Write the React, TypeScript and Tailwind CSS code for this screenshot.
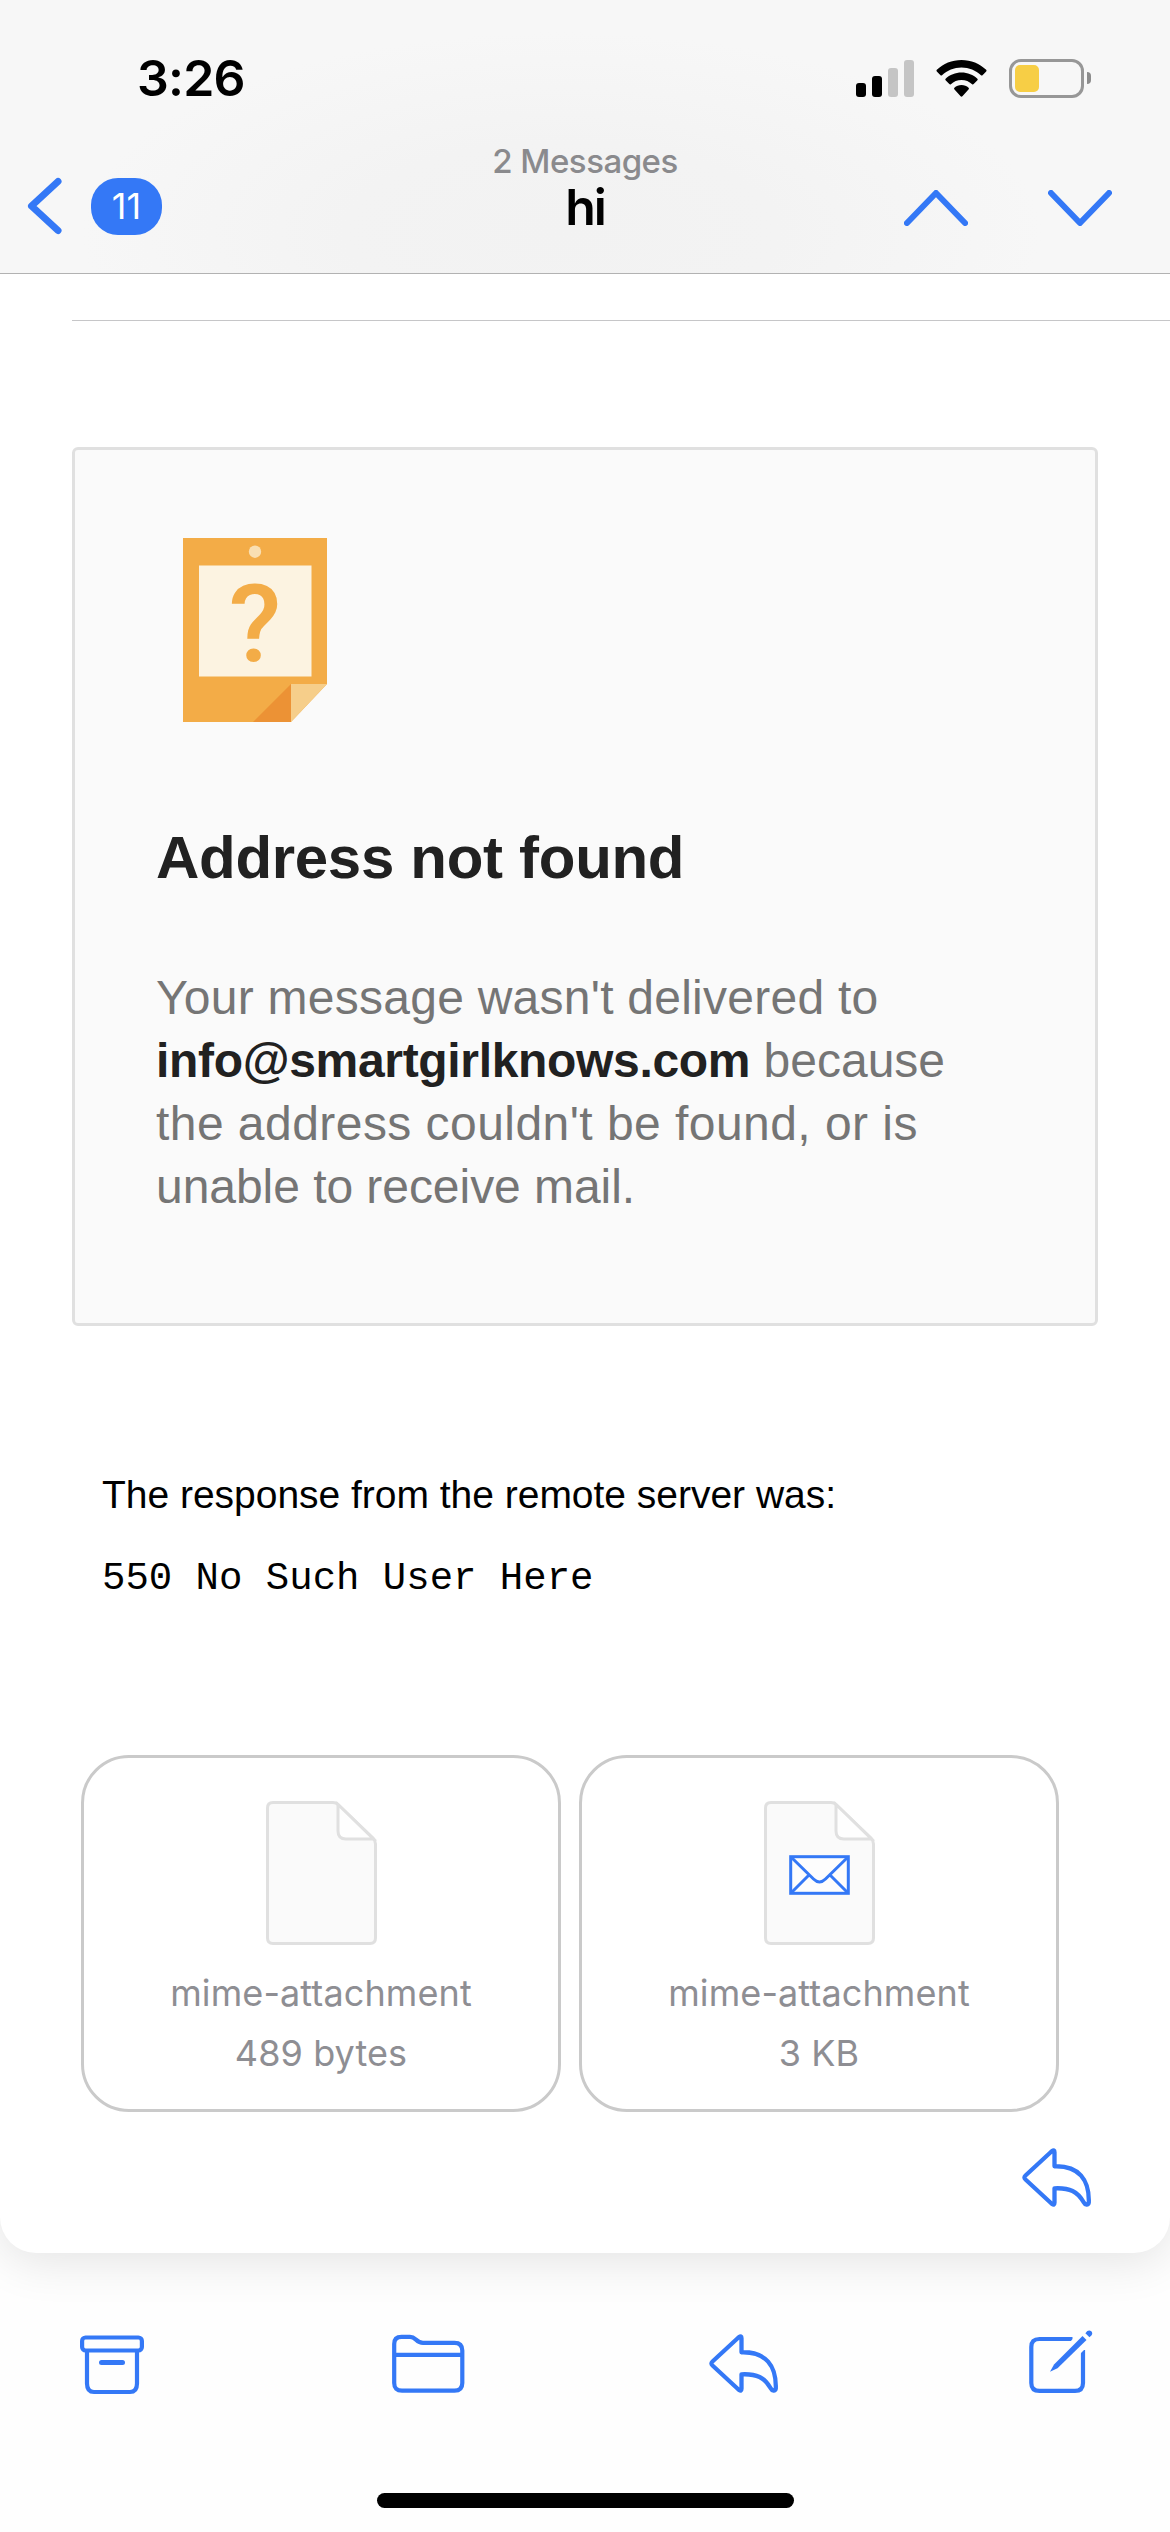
import React from "react";

const BLUE = "#3478f6";

function StatusBar() {
  return (
    <div className="flex h-[136px] items-center pt-5 pl-[137px] pr-[79px]">
      <div className="text-[50px] font-semibold leading-[60px] tracking-[-0.8px] text-black">3:26</div>
      <div className="ml-auto flex items-center">
        <div className="flex h-[37px] items-end gap-[6px]">
          <div className="h-[14px] w-[10px] rounded-[3px] bg-black" />
          <div className="h-[21px] w-[10px] rounded-[3px] bg-black" />
          <div className="h-[29px] w-[10px] rounded-[3px] bg-[#c5c5c5]" />
          <div className="h-[37px] w-[10px] rounded-[3px] bg-[#c5c5c5]" />
        </div>
        <svg className="ml-[22px]" width="51" height="37" viewBox="0 0 51 37">
          <path d="M25.5 0C35 0 43.8 3.7 50.2 9.8c.5.5.5 1.1 0 1.600L46.500 15.200c-.5.4-1 .4-1.500 0C39.800 10.300 33 7.400 25.500 7.400S11.200 10.300 6 15.200c-.5.4-1 .4-1.500 0L.8 11.400c-.5-.5-.5-1.100 0-1.600C7.200 3.700 16 0 25.500 0Z" />
          <path d="M25.500 12.500c6.100 0 11.700 2.300 15.900 6.200.5.5.5 1.100 0 1.600l-3.700 3.800c-.5.5-1.100.5-1.600.1-2.800-2.600-6.500-4.200-10.600-4.200s-7.800 1.600-10.600 4.200c-.5.4-1.100.4-1.600-.1l-3.700-3.800c-.5-.5-.5-1.100 0-1.600 4.200-3.900 9.800-6.200 15.900-6.200Z" />
          <path d="M25.500 25.100c2.700 0 5.200 1 7.100 2.700.5.5.5 1 .1 1.500l-6.300 6.900c-.5.600-1.300.600-1.800 0l-6.300-6.900c-.4-.5-.4-1 .1-1.500 1.900-1.700 4.400-2.700 7.100-2.700Z" />
        </svg>
        <div className="ml-[22px] h-[39px] w-[75px] rounded-[12px] border-[3px] border-[#979797] p-[3px]">
          <div className="h-[27px] w-6 rounded-[5px] bg-[#f7ce45]" />
        </div>
        <div className="ml-[3px] h-3 w-1 rounded-r-[4px] bg-[#8c8c8c]" />
      </div>
    </div>
  );
}

function NavBar() {
  return (
    <div className="grid h-[137px] grid-cols-3">
      <div className="flex items-center pb-px pt-1 pl-[27px]">
        <svg width="36" height="58" viewBox="0 0 36 58" fill="none" stroke={BLUE} strokeWidth="7" strokeLinecap="round" strokeLinejoin="round">
          <path d="M31 4.500 4.500 29 31 53.500" />
        </svg>
        <div className="ml-7 flex h-[57px] w-[71px] items-center justify-center rounded-[27px] bg-[#3478f6] text-[36px] text-white">
          11
        </div>
      </div>
      <div className="flex flex-col items-center pt-2">
        <div className="text-[33px] font-medium leading-[35px] tracking-[-0.5px] text-[#8a8a8d]">2 Messages</div>
        <div className="text-[50px] font-semibold leading-[56px] tracking-[-2px] text-black">hi</div>
      </div>
      <div className="flex items-center justify-end gap-20 pt-[6px] pr-[58px]">
        <svg width="64" height="36" viewBox="0 0 64 36" fill="none" stroke={BLUE} strokeWidth="6" strokeLinecap="round" strokeLinejoin="round">
          <path d="M3 33 32 3 61 33" />
        </svg>
        <svg width="64" height="36" viewBox="0 0 64 36" fill="none" stroke={BLUE} strokeWidth="6" strokeLinecap="round" strokeLinejoin="round">
          <path d="M3 3 32 33 61 3" />
        </svg>
      </div>
    </div>
  );
}

function NotFoundIcon() {
  return (
    <svg className="ml-[27px] block" width="144" height="184" viewBox="0 0 144 184">
      <path d="M0 0H144V146L108 184H0Z" fill="#f3ac47" />
      <circle cx="72" cy="13.700" r="6.200" fill="#f9dfb2" />
      <rect x="16" y="27.500" width="112.500" height="111" fill="#fcf3e1" />
      <text x="72" y="122.500" textAnchor="middle" fontFamily="Roboto" fontWeight="500" fontSize="108" fill="#f3ac47">
        ?
      </text>
      <path d="M108 146V184H70Z" fill="#ec9235" />
      <path d="M108 146H144L108 184Z" fill="#f6ce8a" />
    </svg>
  );
}

function BounceCard() {
  return (
    <div className="ml-[72px] mt-[126px] h-[879px] w-[1026px] rounded-[6px] border-[3px] border-[#e0e0e0] bg-[#fafafa] pl-[81px] pt-[88px] font-['Liberation_Sans',sans-serif]">
      <NotFoundIcon />
      <h1 className="mt-[100px] text-[60px] font-bold leading-[72px] tracking-[-0.3px] text-[#212121]">Address not found</h1>
      <p className="mt-[72px] whitespace-nowrap text-[48px] leading-[63px] text-[#757575]">
        <span className="block tracking-[0.25px]">Your message wasn't delivered to</span>
        <span className="block">
          <b className="tracking-[-0.32px] text-[#212121]">info@smartgirlknows.com</b> because
        </span>
        <span className="block tracking-[0.45px]">the address couldn't be found, or is</span>
        <span className="block tracking-[-0.05px]">unable to receive mail.</span>
      </p>
    </div>
  );
}

function Attachment({ size, mail }: { size: string; mail?: boolean }) {
  return (
    <div className="flex h-[357px] w-[480px] flex-col items-center rounded-[48px] border-[3px] border-[#cacaca] pt-[43px] text-[36px] leading-[60px] text-[#8e8e93]">
      <svg width="111" height="144" viewBox="0 0 111 144" fill="none" stroke="#e0e0e0" strokeWidth="3">
        <path d="M7 1.500H67Q70 1.500 72 3.500L107 37Q109.500 39.500 109.500 43V137Q109.500 142.500 104 142.500H7Q1.500 142.500 1.500 137V7Q1.500 1.500 7 1.500Z" fill="#fafafa" />
        <path d="M72 3.500V30Q72 38 80 38H107.500Z" fill="#fefefe" />
        {mail && (
          <g stroke={BLUE} strokeWidth="3">
            <rect x="26.700" y="55.700" width="57.600" height="36.600" fill="#fdfdfd" />
            <path d="M27.500 56.500 49.500 78Q55.500 84 61.500 78L83.500 56.500M27.500 91.500 45 74M83.500 91.500 66 74" />
          </g>
        )}
      </svg>
      <div className="mt-[18px] tracking-[0.1px]">mime-attachment</div>
      <div className="tracking-[0.1px]">{size}</div>
    </div>
  );
}

function ReplyIcon() {
  return (
    <svg width="70" height="59" viewBox="0 0 70 59" fill="none" stroke={BLUE} strokeWidth="4.300" strokeLinejoin="round" strokeLinecap="round">
      <path d="M32.500 4.200Q32.500 1.500 30 3L3.500 27.500Q1.300 29.500 3.500 31.500L30 56Q32.500 57.500 32.500 54.800V40.300C48 39.600 55.500 43.500 61.500 54C63 57 66.500 57.500 66.800 54.500C67.500 32 57 17.500 32.500 18.300Z" />
    </svg>
  );
}

function Toolbar() {
  return (
    <div className="flex h-[240px] items-start justify-between pl-20 pr-[77px] pt-[77px]">
      <svg className="mt-[5px]" width="64" height="60" viewBox="0 0 64 60" fill="none" stroke={BLUE} strokeWidth="4.200">
        <rect x="2.100" y="2.500" width="59.800" height="13" rx="3.500" />
        <path d="M7 16V48.500Q7 57 14 57H50Q57 57 57 48.500V16" />
        <path d="M21.500 27.500H42.500" strokeWidth="5" strokeLinecap="round" />
      </svg>
      <svg className="mt-[4px] ml-[35px]" width="73" height="60" viewBox="0 0 73 60" fill="none" stroke={BLUE} strokeWidth="4.200">
        <path d="M2.200 10Q2.200 2.800 9.500 2.800H18C24 2.800 24 8.800 31 8.800H62.500Q70.300 8.800 70.300 16.500V49Q70.300 56.700 62.500 56.700H10Q2.200 56.700 2.200 49ZM2.200 20.800H70.300" />
      </svg>
      <div className="mt-[4px] ml-[31px]">
        <ReplyIcon />
      </div>
      <svg className="ml-[37px]" width="64" height="64" viewBox="0 0 64 64" fill="none" stroke={BLUE} strokeWidth="4.200">
        <path d="M43.500 9H10.500Q2.300 9 2.300 17V53Q2.300 60.900 10.500 60.900H46Q54 60.900 54 53V20" />
        <path d="M38 15 52.500 0H64V11L50 25Z" fill="#fefefe" stroke="none" />
        <path d="M53.500 6 25 34.500 21 41.700 28.500 38.300 57.500 10Z" fill={BLUE} stroke="none" />
        <path d="m56.400 3.200 1.900-2.100q2-1.500 4 .2 1.700 2 .200 4L60.500 7.300Z" fill={BLUE} stroke="none" />
      </svg>
    </div>
  );
}

export default function App() {
  return (
    <div className="flex h-[2532px] w-[1170px] flex-col overflow-hidden bg-[#fefefe] font-[Inter,sans-serif]">
      <header className="relative z-10 h-[274px] border-b border-[#b2b2b2] bg-[#f7f8f8] bg-[radial-gradient(ellipse_480px_200px_at_48%_85%,#f2f2f2_0%,#f3f3f3_45%,#f7f7f7_100%)]">
        <StatusBar />
        <NavBar />
      </header>
      <main className="h-[1979px] shrink-0 rounded-b-[36px] bg-white shadow-[0_8px_48px_rgba(0,0,0,0.11)]">
        <div className="ml-[72px] mt-[46px] h-px bg-[#c6c6c8]" />
        <BounceCard />
        <div className="ml-[102px] mt-[146px] text-[39px] leading-[46px] text-black">
          <p className="font-['Liberation_Sans',sans-serif] tracking-[-0.02px]">The response from the remote server was:</p>
          <p className="mt-[38px] font-['Liberation_Mono',monospace]">550 No Such User Here</p>
        </div>
        <div className="ml-[81px] mt-[153px] flex gap-[18px]">
          <Attachment size="489 bytes" />
          <Attachment size="3 KB" mail />
        </div>
        <div className="mt-[36px] flex justify-end pr-[78px]">
          <ReplyIcon />
        </div>
      </main>
      <Toolbar />
      <div className="mx-auto h-[15px] w-[417px] rounded-full bg-black" />
    </div>
  );
}
